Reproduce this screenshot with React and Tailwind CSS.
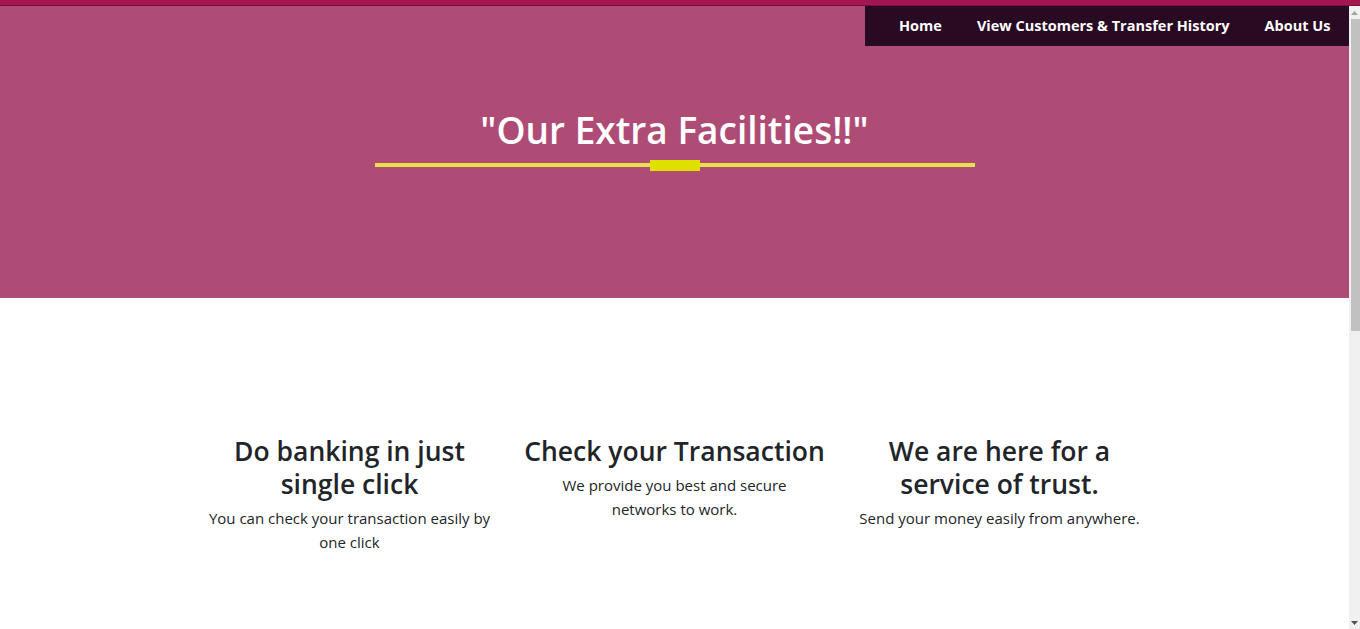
import React from "react";

const font = { fontFamily: '"Segoe UI", "Open Sans", "Noto Sans", sans-serif' };

function Feature({ title, text, paraClass = "", titleClass = "" }) {
  return (
    <div className="w-[300px] flex flex-col items-center text-center">
      <h2 className={`text-[26.5px] leading-[33px] font-semibold text-[#212529] ${titleClass}`}>{title}</h2>
      <p className={`mt-[5px] text-[15px] leading-[24px] text-[#212529] ${paraClass}`}>{text}</p>
    </div>
  );
}

export default function App() {
  return (
    <div className="h-[629px] w-[1360px] flex flex-col overflow-hidden bg-white" style={font}>
      <div className="h-[6px] bg-[#a3164f] border-b border-[#7c0e3b] shrink-0" />
      <div className="flex flex-1 min-h-0">
        <main className="flex-1 min-w-0">
          <section className="h-[292px] bg-[#ae4c76] flex flex-col">
            <div className="flex justify-end">
              <nav className="h-[40px] bg-[#290a23] flex items-center pl-[16px] pr-[1px]">
                {["Home", "View Customers & Transfer History", "About Us"].map((t) => (
                  <a key={t} className="px-[17.5px] text-white font-bold text-[14.5px]">{t}</a>
                ))}
              </nav>
            </div>
            <h1 className="mt-[60px] text-center text-white text-[37px] leading-[48px] font-semibold">
              "Our Extra Facilities!!"
            </h1>
            <div className="mt-[9px] flex justify-center">
              <div className="w-[600px] h-[4px] bg-[#e8e04c] flex justify-center items-center">
                <div className="w-[50px] h-[11px] bg-[#e0e000]" />
              </div>
            </div>
          </section>
          <section className="pt-[137px] flex justify-center gap-[25px]">
            <Feature title="Do banking in just single click" text="You can check your transaction easily by one click" />
            <Feature title="Check your Transaction" titleClass="whitespace-nowrap" text="We provide you best and secure networks to work." paraClass="max-w-[240px]" />
            <Feature title="We are here for a service of trust." text="Send your money easily from anywhere." />
          </section>
        </main>
        <div className="w-[11px] bg-[#f0f0f0] flex flex-col items-end shrink-0">
          <div className="h-[13px] w-full flex items-center justify-center">
            <svg width="7" height="4" viewBox="0 0 7 4"><path d="M0 4 L3.5 0 L7 4 Z" fill="#a3a3a3" /></svg>
          </div>
          <div className="w-[9px] h-[312px] bg-[#c1c1c1]" />
          <div className="flex-1" />
          <div className="h-[13px] w-full flex items-center justify-center">
            <svg width="7" height="4" viewBox="0 0 7 4"><path d="M0 0 L3.5 4 L7 0 Z" fill="#505050" /></svg>
          </div>
        </div>
      </div>
    </div>
  );
}
